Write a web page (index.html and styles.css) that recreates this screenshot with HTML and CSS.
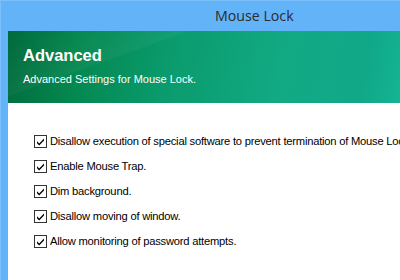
FILE: index.html
```html
<!DOCTYPE html>
<html>
<head>
<meta charset="utf-8">
<link rel="stylesheet" href="styles.css">
</head>
<body>
<div class="window">
  <div class="titlebar"><span class="title">Mouse Lock</span></div>
  <div class="client">
    <div class="header">
      <div class="h-title">Advanced</div>
      <div class="h-sub">Advanced Settings for Mouse Lock.</div>
    </div>
    <div class="options">
      <label class="opt"><span class="cb"><svg viewBox="0 0 13 13" width="13" height="13"><path d="M3 6.2 L5.2 8.6 L10 3.6 L10 5.6 L5.2 10.6 L3 8.2 Z" fill="#000"/></svg></span><span class="txt">Disallow execution of special software to prevent termination of Mouse Lock.</span></label>
      <label class="opt"><span class="cb"><svg viewBox="0 0 13 13" width="13" height="13"><path d="M3 6.2 L5.2 8.6 L10 3.6 L10 5.6 L5.2 10.6 L3 8.2 Z" fill="#000"/></svg></span><span class="txt">Enable Mouse Trap.</span></label>
      <label class="opt"><span class="cb"><svg viewBox="0 0 13 13" width="13" height="13"><path d="M3 6.2 L5.2 8.6 L10 3.6 L10 5.6 L5.2 10.6 L3 8.2 Z" fill="#000"/></svg></span><span class="txt">Dim background.</span></label>
      <label class="opt"><span class="cb"><svg viewBox="0 0 13 13" width="13" height="13"><path d="M3 6.2 L5.2 8.6 L10 3.6 L10 5.6 L5.2 10.6 L3 8.2 Z" fill="#000"/></svg></span><span class="txt">Disallow moving of window.</span></label>
      <label class="opt"><span class="cb"><svg viewBox="0 0 13 13" width="13" height="13"><path d="M3 6.2 L5.2 8.6 L10 3.6 L10 5.6 L5.2 10.6 L3 8.2 Z" fill="#000"/></svg></span><span class="txt">Allow monitoring of password attempts.</span></label>
    </div>
  </div>
</div>
</body>
</html>
```
FILE: styles.css
```css
html, body {
  margin: 0;
  padding: 0;
  width: 400px;
  height: 280px;
  overflow: hidden;
}
.window {
  width: 400px;
  height: 280px;
  background: #63b3f9;
  display: flex;
  flex-direction: column;
  border-left: 1px solid #7cc0fb;
  border-top: 1px solid #7cc0fb;
  box-sizing: border-box;
}
.titlebar {
  height: 30px;
  display: flex;
  align-items: center;
  padding-left: 214px;
}
.title {
  font-family: "Open Sans", "Noto Sans", sans-serif;
  font-size: 14.2px;
  color: #2b2b2b;
  margin-top: -2px;
}
.client {
  flex: 1;
  margin-left: 7px;
  background: #fff;
  display: flex;
  flex-direction: column;
  overflow: hidden;
}
.header {
  height: 72px;
  flex: none;
  box-sizing: border-box;
  padding: 14px 0 0 15px;
  background:
    linear-gradient(160deg, rgba(255,255,255,0) 0%, rgba(255,255,255,0.04) 30%, rgba(255,255,255,0) 31%),
    linear-gradient(100deg, #006a3c 0%, #04874f 18%, #0a9a6c 40%, #12aa84 70%, #10a888 90%, #14b493 100%);
  color: #fff;
  font-family: "Liberation Sans", Arial, sans-serif;
}
.h-title {
  font-size: 16.5px;
  font-weight: bold;
  line-height: 20px;
}
.h-sub {
  font-size: 11px;
  line-height: 14px;
  margin-top: 7px;
}
.options {
  display: flex;
  flex-direction: column;
  padding: 32px 0 0 26px;
  gap: 12px;
  font-family: "Liberation Sans", Arial, sans-serif;
  font-size: 11.2px;
  letter-spacing: -0.22px;
  color: #000;
}
.opt {
  display: flex;
  align-items: center;
  gap: 3px;
  white-space: nowrap;
  height: 13px;
}
.cb {
  width: 13px;
  height: 13px;
  box-sizing: border-box;
  border: 1px solid #333;
  background: #fff;
  display: block;
  position: relative;
  flex: none;
}
.cb svg {
  position: absolute;
  left: -1px;
  top: -1px;
}
.txt {
  line-height: 13px;
}
```
